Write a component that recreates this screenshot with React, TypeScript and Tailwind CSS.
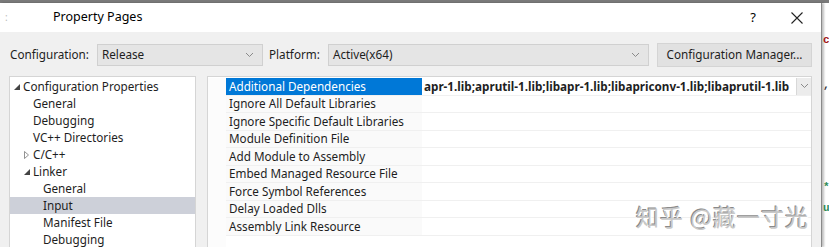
import React from "react";

const treeItems: { label: string; indent: number; arrow?: "open" | "closed"; selected?: boolean }[] = [
  { label: "Configuration Properties", indent: 0, arrow: "open" },
  { label: "General", indent: 1 },
  { label: "Debugging", indent: 1 },
  { label: "VC++ Directories", indent: 1 },
  { label: "C/C++", indent: 1, arrow: "closed" },
  { label: "Linker", indent: 1, arrow: "open" },
  { label: "General", indent: 2 },
  { label: "Input", indent: 2, selected: true },
  { label: "Manifest File", indent: 2 },
  { label: "Debugging", indent: 2 },
];

const props = [
  "Additional Dependencies",
  "Ignore All Default Libraries",
  "Ignore Specific Default Libraries",
  "Module Definition File",
  "Add Module to Assembly",
  "Embed Managed Resource File",
  "Force Symbol References",
  "Delay Loaded Dlls",
  "Assembly Link Resource",
];

function Chevron() {
  return (
    <svg width="9" height="6" viewBox="0 0 9 6">
      <path d="M1 1 L4.5 4.5 L8 1" fill="none" stroke="#8a8a8a" strokeWidth="1" />
    </svg>
  );
}

function Combo({ value, width }: { value: string; width: string }) {
  return (
    <div className={`${width} h-[22px] bg-[#e5e5e5] border border-[#d0d0d0] flex items-center justify-between pl-[4px] pr-[8px]`}>
      <span>{value}</span>
      <Chevron />
    </div>
  );
}

export default function App() {
  return (
    <div
      className="w-[829px] h-[247px] overflow-hidden bg-white flex flex-col text-[11.7px] text-[#1e1e1e]"
      style={{ fontFamily: '"Noto Sans", "Open Sans", sans-serif' }}
    >
      <div className="h-[3px] bg-[#7a7a7a] shrink-0" />
      <div className="flex flex-1 min-h-0">
        <div className="w-[822px] flex flex-col border-r border-[#8a8a8a] shadow-[2px_0_2px_rgba(0,0,0,0.25)]">
          {/* title bar */}
          <div className="h-[29px] bg-white flex items-center shrink-0">
            <div className="w-[53px] pl-[5px] text-[#bbbbbb] text-[10px]">:</div>
            <div className="text-[12.5px] text-black">Property Pages</div>
            <div className="flex-1" />
            <div className="w-[44px] text-center text-[13px] text-black">?</div>
            <div className="w-[44px] flex justify-center mr-[2px]">
              <svg width="12" height="12" viewBox="0 0 12 12">
                <path d="M0.5 0.5 L11.5 11.5 M11.5 0.5 L0.5 11.5" stroke="#222" strokeWidth="1.1" />
              </svg>
            </div>
          </div>
          {/* body */}
          <div className="flex-1 bg-[#f0f0f0] flex flex-col px-[9px] pt-[11px]">
            <div className="flex items-center h-[24px]">
              <span className="w-[88px] pl-[1px]">Configuration:</span>
              <Combo value="Release" width="w-[166px]" />
              <span className="ml-[6px] w-[59px]">Platform:</span>
              <Combo value="Active(x64)" width="w-[321px]" />
              <div className="ml-[8px] w-[155px] h-[24px] bg-[#e1e1e1] border border-[#d4d4d4] flex items-center justify-center">
                Configuration Manager...
              </div>
            </div>
            <div className="flex mt-[9px] flex-1 min-h-0">
              {/* tree */}
              <div className="w-[187px] bg-white border border-[#d5d5d5] pt-[1px]">
                {treeItems.map((t, i) => (
                  <div
                    key={i}
                    className={`h-[17px] flex items-center whitespace-nowrap ${t.selected ? "bg-[#cdd0d9]" : ""}`}
                    style={{ paddingLeft: 4 + t.indent * 10 }}
                  >
                    <span className="w-[9px] flex items-center justify-start">
                      {t.arrow === "open" && (
                        <svg width="6" height="6" viewBox="0 0 6 6">
                          <path d="M6 0 L6 6 L0 6 Z" fill="#444" />
                        </svg>
                      )}
                      {t.arrow === "closed" && (
                        <svg width="5" height="8" viewBox="0 0 5 8">
                          <path d="M0.5 0.5 L4.5 4 L0.5 7.5 Z" fill="none" stroke="#777" strokeWidth="0.8" />
                        </svg>
                      )}
                    </span>
                    <span>{t.label}</span>
                  </div>
                ))}
              </div>
              {/* grid */}
              <div className="ml-[11px] w-[605px] bg-white border border-[#d5d5d5] flex pt-[1px]">
                <div className="w-[18px] bg-[#fcfcfc]" />
                <div className="flex-1 flex flex-col">
                  {props.map((p, i) => (
                    <div key={p} className="h-[17.55px] flex border-b border-[#f0f0f0]">
                      <div
                        className={`w-[196px] pl-[3px] flex items-center ${
                          i === 0 ? "bg-[#0078d7] text-white" : "bg-[#fafafa]"
                        }`}
                      >
                        {p}
                      </div>
                      <div className="flex-1 flex items-center">
                        {i === 0 && (
                          <>
                            <span className="flex-1 font-bold pl-[2px] whitespace-nowrap overflow-hidden">
                              apr-1.lib;aprutil-1.lib;libapr-1.lib;libapriconv-1.lib;libaprutil-1.lib
                            </span>
                            <span className="w-[15px] h-[17px] bg-[#ececec] border-l border-[#d8d8d8] flex items-center justify-center">
                              <Chevron />
                            </span>
                          </>
                        )}
                      </div>
                    </div>
                  ))}
                  <div className="flex-1 flex justify-end items-start pr-[2px] -mt-[37px]">
                    <span
                      className="text-[23px] text-[#c8c8c8] tracking-[1px]"
                      style={{ fontFamily: '"Noto Sans CJK SC", sans-serif', textShadow: "1px 1px 0 #ffffff, -1px -1px 0 #8a8a8a" }}
                    >
                      知乎 @藏一寸光
                    </span>
                  </div>
                </div>
              </div>
            </div>
          </div>
        </div>
        <div className="flex-1 flex flex-col pl-[1px] text-[11px] font-bold" style={{ fontFamily: '"Liberation Mono", monospace' }}>
          <span className="mt-[29px] text-[#a31515]">c</span>
          <span className="mt-[28px] text-[#333]">,</span>
          <span className="mt-[86px] text-[#2e8b57]">*</span>
          <span className="mt-[4px] text-[#2e8b57]">u</span>
        </div>
      </div>
    </div>
  );
}
